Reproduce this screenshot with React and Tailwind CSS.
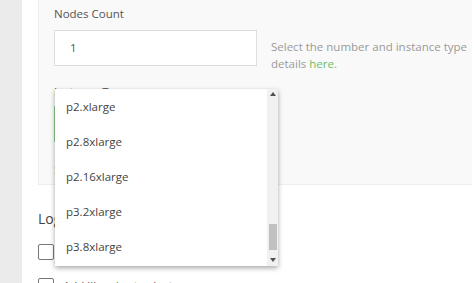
import React from 'react';

const options = ['p2.xlarge', 'p2.8xlarge', 'p2.16xlarge', 'p3.2xlarge', 'p3.8xlarge'];

export default function App() {
  return (
    <div className="flex h-[283px] w-[474px] overflow-hidden bg-white font-['Open_Sans',sans-serif]">
      {/* side rail */}
      <div className="w-[22px] shrink-0 bg-[#ebebeb]" />

      <div className="relative flex-1 pl-[16px]">
        {/* cluster settings panel */}
        <div className="h-[185px] w-[434px] border-b border-l border-[#eeeeee] bg-[#f9f9f9] pl-[15px] pt-[6px]">
          <div className="text-[11.5px] leading-[16px] text-[#555]">Nodes Count</div>
          <div className="mt-[8px] flex items-start">
            <div className="flex h-[36px] w-[203px] shrink-0 items-center border border-[#dddddd] bg-white pl-[15px] text-[11.5px] text-[#555]">
              1
            </div>
            <p className="ml-[14px] mt-[8px] text-[11.5px] leading-[17px] text-[#9a9a9a]">
              Select the number and instance type details <span className="text-[#6cbf6a]">here.</span>
            </p>
          </div>

          <div className="mt-[12px] text-[11.5px] leading-[16px] text-[#555]">Instance Type</div>
          <div className="mt-[6px] h-[36px] w-[203px] border border-[#8cc98a] bg-white" />
          <p className="mt-[20px] text-[11px] leading-[16px] text-[#9a9a9a]">Select an instance type.</p>
        </div>

        <div className="mt-[24px] text-[14px] leading-[20px] text-[#444]">Logging</div>
        <div className="mt-[14px] flex items-center gap-[9px]">
          <div className="h-[16px] w-[16px] rounded-[2px] border border-[#777] bg-white" />
          <span className="text-[11.5px] leading-[18px] text-[#555]">Enable logging</span>
        </div>
        <div className="mt-[16px] flex items-center gap-[9px]">
          <div className="h-[16px] w-[16px] rounded-[2px] border border-[#777] bg-white" />
          <span className="text-[11.5px] leading-[18px] text-[#555]">Add libraries to cluster</span>
        </div>

        {/* open instance type dropdown */}
        <div className="absolute left-[33px] top-[89px] flex h-[177px] w-[223px] bg-white shadow-[0_2px_5px_rgba(0,0,0,0.35)]">
          <ul className="flex-1">
            {options.map((o) => (
              <li key={o} className="flex h-[35px] items-center pl-[11px] text-[11.5px] text-[#444]">
                {o}
              </li>
            ))}
          </ul>
          <div className="flex w-[11px] flex-col items-center bg-[#f1f1f1]">
            <div className="mt-[3px] h-0 w-0 border-x-[3px] border-b-[4px] border-x-transparent border-b-[#505050]" />
            <div className="flex-1" />
            <div className="mb-[8px] h-[26px] w-[8px] bg-[#c1c1c1]" />
            <div className="mb-[4px] h-0 w-0 border-x-[3px] border-t-[4px] border-x-transparent border-t-[#505050]" />
          </div>
        </div>
      </div>
    </div>
  );
}
